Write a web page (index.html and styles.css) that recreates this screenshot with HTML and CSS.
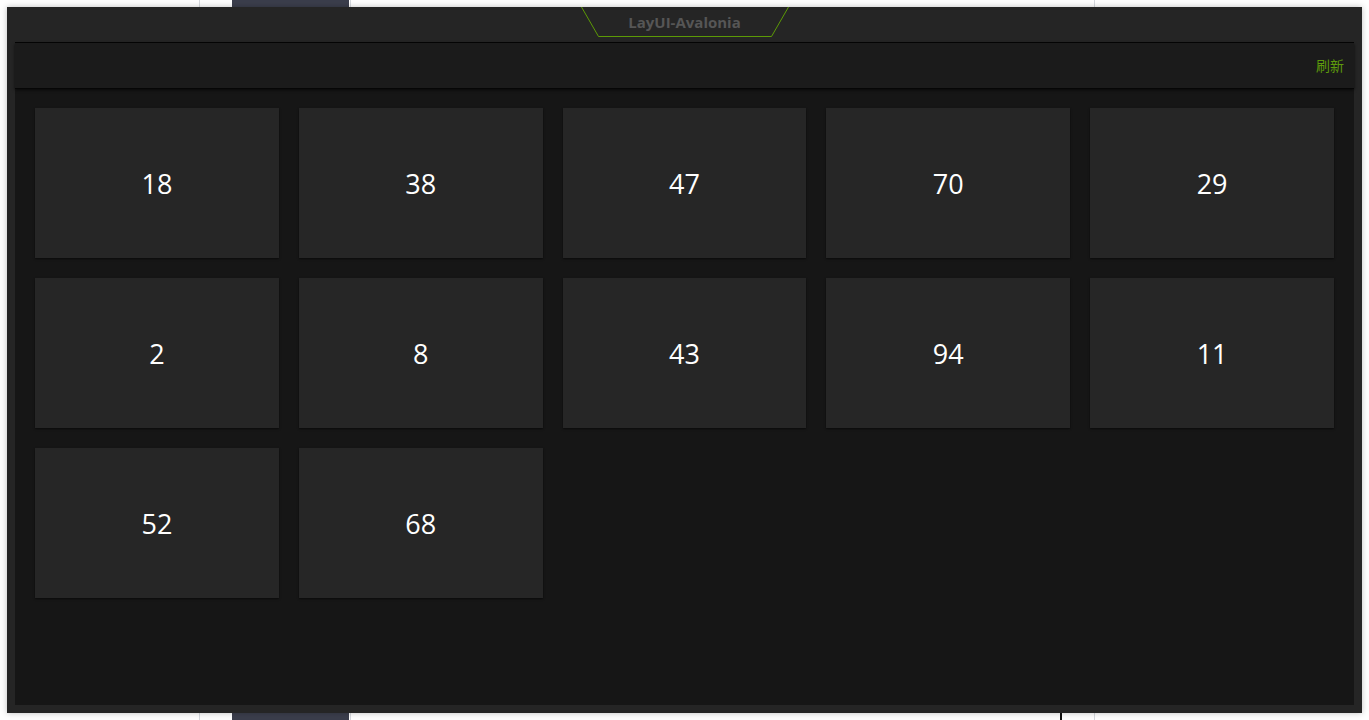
FILE: index.html
```html
<!DOCTYPE html>
<html lang="zh">
<head>
<meta charset="utf-8">
<title>LayUI-Avalonia</title>
<link rel="stylesheet" href="styles.css">
</head>
<body>
<div class="desktop">
  <div class="bg-line bg-line-a"></div>
  <div class="bg-block bg-block-top"></div>
  <div class="bg-line bg-line-b"></div>
  <div class="bg-block bg-block-bottom"></div>
  <div class="bg-line bg-line-c"></div>
  <div class="bg-line bg-line-d"></div>

  <div class="window">
    <div class="titlebar">
      <div class="title-tab">
        <svg class="tab-shape" width="208" height="31" viewBox="0 0 208 31">
          <polyline points="0.5,0 17.5,29.5 190.5,29.5 207.5,0" fill="none" stroke="#5c9a06" stroke-width="1"/>
        </svg>
        <span class="title-text">LayUI-Avalonia</span>
      </div>
    </div>
    <div class="client">
      <div class="toolbar">
        <span class="refresh">刷新</span>
      </div>
      <div class="content">
        <div class="grid">
          <div class="card">18</div>
          <div class="card">38</div>
          <div class="card">47</div>
          <div class="card">70</div>
          <div class="card">29</div>
          <div class="card">2</div>
          <div class="card">8</div>
          <div class="card">43</div>
          <div class="card">94</div>
          <div class="card">11</div>
          <div class="card">52</div>
          <div class="card">68</div>
        </div>
      </div>
    </div>
  </div>
</div>
</body>
</html>
```

FILE: styles.css
```css
html, body {
  margin: 0;
  padding: 0;
  background: #ffffff;
  font-family: "Open Sans", "Noto Sans", "Noto Sans CJK SC", sans-serif;
}

.desktop {
  position: relative;
  width: 1369px;
  height: 720px;
  padding: 7px;
  box-sizing: border-box;
  overflow: hidden;
}

/* backdrop pieces peeking out around the window */
.bg-line {
  position: absolute;
  top: 0;
  width: 1px;
  height: 720px;
  background: #d6d9de;
}
.bg-line-a { left: 199px; }
.bg-line-b { left: 350px; }
.bg-line-c { left: 1060px; width: 2px; background: #111; top: 700px; height: 20px; }
.bg-line-d { left: 1094px; }
.bg-block {
  position: absolute;
  left: 232px;
  width: 117px;
  background: #3b3e4c;
}
.bg-block-top { top: 0; height: 7px; }
.bg-block-bottom { top: 712px; height: 8px; border-top: 1px solid #1a8a78; }

.window {
  position: relative;
  z-index: 1;
  width: 1355px;
  height: 706px;
  background: #252525;
  box-shadow: 0 0 6px rgba(0, 0, 0, 0.25);
  padding: 0 8px 8px 8px;
  box-sizing: border-box;
  display: flex;
  flex-direction: column;
}

.titlebar {
  height: 35px;
  display: flex;
  justify-content: center;
  flex-shrink: 0;
}

.title-tab {
  position: relative;
  width: 208px;
  height: 31px;
  display: flex;
  align-items: center;
  justify-content: center;
}

.tab-shape {
  position: absolute;
  left: 0;
  top: 0;
}

.title-text {
  position: relative;
  font-family: "Open Sans", "Noto Sans", sans-serif;
  font-weight: 700;
  font-size: 15px;
  color: #565656;
  margin-top: -1px;
}

.client {
  flex: 1;
  display: flex;
  flex-direction: column;
  border-top: 1px solid #050505;
  min-height: 0;
}

.toolbar {
  height: 45px;
  background: #1b1b1b;
  border-bottom: 1px solid #060606;
  box-shadow: 0 1px 3px rgba(0, 0, 0, 0.7);
  display: flex;
  align-items: center;
  justify-content: flex-end;
  padding-right: 10px;
  position: relative;
  z-index: 1;
  flex-shrink: 0;
}

.refresh {
  font-family: "Noto Sans CJK SC", sans-serif;
  font-size: 14px;
  color: #5d9a0c;
  margin-top: -2px;
}

.content {
  flex: 1;
  background: #161616;
  padding: 19px 20px 20px 20px;
}

.grid {
  display: grid;
  grid-template-columns: repeat(5, 1fr);
  grid-auto-rows: 150px;
  column-gap: 20px;
  row-gap: 20px;
}

.card {
  background: #262626;
  box-shadow: 0 1px 2px rgba(0, 0, 0, 0.6);
  display: flex;
  align-items: center;
  justify-content: center;
  color: #ffffff;
  font-size: 27px;
  font-family: "Open Sans", "Noto Sans", sans-serif;
  padding-top: 1px;
}
```
